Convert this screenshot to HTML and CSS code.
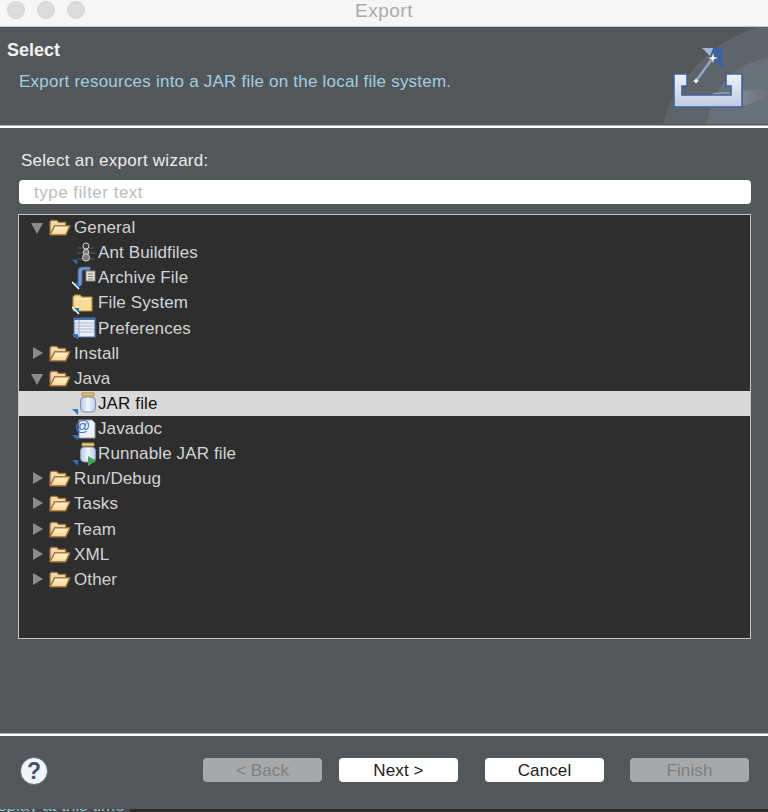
FILE: index.html
```
<!DOCTYPE html>
<html lang="en">
<head>
<meta charset="utf-8">
<title>Export</title>
<link rel="stylesheet" href="styles.css">
</head>
<body>
<svg class="defs" width="0" height="0" aria-hidden="true">
  <defs>
    <linearGradient id="fold" x1="0" y1="0" x2="0" y2="1"><stop offset="0" stop-color="#fff3cf"/><stop offset="1" stop-color="#f5d590"/></linearGradient>
    <linearGradient id="jar" x1="0" y1="0" x2="1" y2="0"><stop offset="0" stop-color="#b4c8e2"/><stop offset=".5" stop-color="#f0f4fa"/><stop offset="1" stop-color="#bccce2"/></linearGradient>
    <linearGradient id="tray" x1="0" y1="0" x2="0" y2="1"><stop offset="0" stop-color="#eef1f8"/><stop offset="1" stop-color="#bfcbe2"/></linearGradient>
    <linearGradient id="glow" x1="0" y1="0" x2="1" y2="0"><stop offset="0" stop-color="#aeb1b3" stop-opacity=".95"/><stop offset="1" stop-color="#6f767d" stop-opacity=".5"/></linearGradient>
    <symbol id="folder" viewBox="0 0 24 18">
      <path d="M2 16.500V3.500L3 1.500H9L11 3.500H18.500V7H7L2 16.500Z" fill="#efd9ac" stroke="#a5763a" stroke-width="1.300" stroke-linejoin="round"/>
      <path d="M2 16.800L7 7.200H23L18.500 16.800Z" fill="url(#fold)" stroke="#a5763a" stroke-width="1.400" stroke-linejoin="round"/>
    </symbol>
    <symbol id="corner" viewBox="0 0 8 8"><path d="M0 1H7V8Z" fill="#2f72b8"/></symbol>
  </defs>
</svg>
<div class="window">
  <header class="titlebar">
    <div class="lights"><span class="light"></span><span class="light"></span><span class="light"></span></div>
    <div class="title">Export</div>
  </header>
  <section class="banner">
    <h1 class="banner-title">Select</h1>
    <p class="banner-desc">Export resources into a JAR file on the local file system.</p>
    <svg class="banner-art" width="105" height="97" viewBox="0 0 105 97" aria-hidden="true">
      <path d="M0 97C8 60 45 15 95 0H105V97Z" fill="#5e6469"/>
      <path d="M44 97C48 65 66 38 105 31V97Z" fill="#68707a"/>
      <path d="M50 66L105 62V70L78 80H42Z" fill="url(#glow)"/>
      <path d="M11 47H24V59H19V68H68V59H63V47H79V80H11Z" fill="url(#tray)" stroke="#3f629c" stroke-width="1.600"/>
      <path d="M33 54L49 32" stroke="#8fa6cf" stroke-width="2.400"/>
      <path d="M39 21H60V43Z" fill="#3f629c"/>
      <path d="M39 21H50L47 29Z" fill="#a3b6d6"/>
      <path d="M50 26L51 30L55 31L51 32L50 36L49 32L45 31L49 30Z" fill="#fff"/>
      <path d="M33 51L34 53L36 54L34 55L33 57L32 55L30 54L32 53Z" fill="#fff"/>
    </svg>
  </section>
  <div class="divider"></div>
  <main class="body">
    <label class="field-label">Select an export wizard:</label>
    <div class="filter">type filter text</div>
    <div class="tree">
      <div class="row">
        <span class="twist open"></span>
        <svg class="folder-icon"><use href="#folder"/></svg>
        <span class="name">General</span>
      </div>
      <div class="row child">
        <svg class="leaf" viewBox="0 0 26 24"><use href="#corner" x="0" y="18" width="6" height="6"/><path d="M6 7H22M5 12H23M6 18H22" stroke="#5a5a5a" stroke-width="1"/><g fill="#7b7b7b" stroke="#cfcfcf" stroke-width="1"><circle cx="14" cy="5" r="3" fill="#3a3a3a"/><circle cx="14" cy="11" r="2.800"/><circle cx="14" cy="16.500" r="3.600"/></g></svg>
        <span class="name">Ant Buildfiles</span>
      </div>
      <div class="row child">
        <svg class="leaf" viewBox="0 0 26 24"><path d="M6 5Q6 1 10 1H18V4H11Q10 4 10 6V17Q10 20 6 21Z" fill="#7c9ace" stroke="#3f629c"/><path d="M14 5H23V15H14Z" fill="#e8e4d2" stroke="#8c8c80"/><path d="M16 8H21M16 10.500H21M16 13H21" stroke="#6d7f9c"/><use href="#corner" x="0" y="16" width="8" height="8"/><path d="M0 16L7 23" stroke="#fff" stroke-width="1.500"/></svg>
        <span class="name">Archive File</span>
      </div>
      <div class="row child">
        <svg class="leaf" viewBox="0 0 26 24"><path d="M1 19V6L3 4H8L10 6H20V20H2Z" fill="#f6dc97" stroke="#b18842" stroke-width="1.200"/><path d="M2 8H19" stroke="#fff0c4"/><use href="#corner" x="0" y="16" width="8" height="8"/><path d="M0 16L7 23" stroke="#fff" stroke-width="1.500"/></svg>
        <span class="name">File System</span>
      </div>
      <div class="row child">
        <svg class="leaf" viewBox="0 0 26 24"><path d="M2 2H23V21H2Z" fill="#e9edf6" stroke="#4a6ea6" stroke-width="1.200"/><path d="M2 3H23" stroke="#4a6ea6" stroke-width="2"/><path d="M7 4V21" stroke="#98abc9"/><path d="M3 7H22M3 10H22M3 13H22M3 16H22" stroke="#aab8cf"/><use href="#corner" x="0" y="17" width="7" height="7"/></svg>
        <span class="name">Preferences</span>
      </div>
      <div class="row">
        <span class="twist"></span>
        <svg class="folder-icon"><use href="#folder"/></svg>
        <span class="name">Install</span>
      </div>
      <div class="row">
        <span class="twist open"></span>
        <svg class="folder-icon"><use href="#folder"/></svg>
        <span class="name">Java</span>
      </div>
      <div class="row child selected">
        <svg class="leaf" viewBox="0 0 26 24"><path d="M10 2H22V5H10Z" fill="#e8cd7a" stroke="#a98a35"/><rect x="8.500" y="6" width="15" height="15" rx="4" fill="url(#jar)" stroke="#7b90b2"/><use href="#corner" x="0" y="17" width="7" height="7"/></svg>
        <span class="name">JAR file</span>
      </div>
      <div class="row child">
        <svg class="leaf" viewBox="0 0 26 24"><path d="M7 3H20L23 6V21H7Z" fill="#eff1f6" stroke="#8e9cb4"/><text class="at" x="3" y="14">@</text><use href="#corner" x="0" y="17" width="7" height="7"/></svg>
        <span class="name">Javadoc</span>
      </div>
      <div class="row child">
        <svg class="leaf" viewBox="0 0 26 24"><path d="M10 1H22V4H10Z" fill="#e8cd7a" stroke="#a98a35"/><rect x="8.500" y="5" width="15" height="15" rx="4" fill="url(#jar)" stroke="#7b90b2"/><path d="M16 14L24 19L16 24Z" fill="#3fa556"/><use href="#corner" x="0" y="17" width="7" height="7"/></svg>
        <span class="name">Runnable JAR file</span>
      </div>
      <div class="row"><span class="twist"></span><svg class="folder-icon"><use href="#folder"/></svg><span class="name">Run/Debug</span></div>
      <div class="row"><span class="twist"></span><svg class="folder-icon"><use href="#folder"/></svg><span class="name">Tasks</span></div>
      <div class="row"><span class="twist"></span><svg class="folder-icon"><use href="#folder"/></svg><span class="name">Team</span></div>
      <div class="row"><span class="twist"></span><svg class="folder-icon"><use href="#folder"/></svg><span class="name">XML</span></div>
      <div class="row"><span class="twist"></span><svg class="folder-icon"><use href="#folder"/></svg><span class="name">Other</span></div>
    </div>
  </main>
  <div class="divider"></div>
  <footer class="footer">
    <div class="help">?</div>
    <div class="actions">
      <button class="btn disabled" type="button">&lt; Back</button>
      <button class="btn next" type="button">Next &gt;</button>
      <button class="btn cancel" type="button">Cancel</button>
      <button class="btn disabled finish" type="button">Finish</button>
    </div>
  </footer>
  <div class="behind"><span class="behind-text">splay at this time</span></div>
</div>
</body>
</html>
```
FILE: styles.css
```
* { box-sizing: border-box; }
html, body { margin: 0; padding: 0; }
body { width: 768px; height: 812px; overflow: hidden; background: #53575a; font-family: "Liberation Sans", Arial, sans-serif; }
.defs { display: block; height: 0; }
.window { width: 768px; height: 812px; display: flex; flex-direction: column; overflow: hidden; }

.titlebar { height: 27px; flex: none; background: #f6f6f6; border-bottom: 1px solid #c6c6c6; display: flex; align-items: flex-start; position: relative; }
.lights { display: flex; gap: 12px; padding: 1px 0 0 7px; }
.light { width: 18px; height: 18px; border-radius: 50%; background: #dcdcdc; border: 1px solid #d4d4d4; }
.title { position: absolute; left: 0; right: 0; top: 0; text-align: center; font-size: 19px; line-height: 22px; letter-spacing: .5px; color: #aaaaaa; }

.banner { height: 98px; flex: none; position: relative; background: #53575a; padding: 13px 0 0 7px; }
.banner-title { margin: 0; font-size: 18px; line-height: 20px; font-weight: 700; color: #f2f2f2; }
.banner-desc { margin: 12px 0 0 12px; font-size: 17px; line-height: 20px; letter-spacing: .22px; color: #9fcfe4; }
.banner-art { position: absolute; right: 0; top: 0; }

.divider { height: 3px; flex: none; background: #fdfdfd; border-top: 1px solid #a9abac; }

.body { height: 605px; flex: none; padding: 23px 17px 0 18px; display: flex; flex-direction: column; }
.field-label { font-size: 17px; line-height: 20px; letter-spacing: .25px; color: #ececec; padding-left: 3px; }
.filter { margin: 9px 0 0 1px; height: 24px; background: #fff; border-radius: 4px; padding-left: 15px; font-size: 17px; line-height: 26px; letter-spacing: .5px; color: #bdbdbd; }
.tree { margin-top: 10px; height: 425px; background: #2e2e2e; border: 1px solid #c3c5c6; }

.row { height: 25.14px; display: flex; align-items: center; padding-left: 12px; font-size: 17px; letter-spacing: .12px; color: #d2d4d6; }
.row.child { padding-left: 53px; }
.row.selected { background: #d9d9d9; color: #111; }
.twist { width: 13px; height: 13px; flex: none; position: relative; }
.twist::before { content: ""; position: absolute; left: 2px; top: 0; border-style: solid; border-width: 6.500px 0 6.500px 10px; border-color: transparent transparent transparent #8b8b8b; }
.twist.open::before { left: 0; top: 2px; border-width: 11px 6.500px 0 6.500px; border-color: #8b8b8b transparent transparent transparent; }
.folder-icon { width: 23px; height: 17px; flex: none; margin-left: 4px; margin-right: 3px; }
.leaf { width: 26px; height: 24px; flex: none; }
.at { font-family: "Liberation Sans", sans-serif; font-size: 15px; font-weight: 700; font-style: italic; fill: #3f78c4; }
.name { white-space: nowrap; padding-top: 1px; }

.footer { height: 73px; flex: none; display: flex; align-items: flex-start; padding: 22px 19px 0 20px; justify-content: space-between; }
.help { width: 28px; height: 28px; margin-top: -1px; border-radius: 50%; background: #f4f5f8; border: 1px solid #5d6f8e; color: #44546f; font-size: 23px; font-weight: 700; line-height: 27px; text-align: center; }
.actions { display: flex; }
.btn { width: 119px; height: 24px; border: 0; border-radius: 4px; background: #fff; color: #1b1b1b; padding: 1px 0 0; font-family: inherit; font-size: 17px; letter-spacing: .12px; }
.next { margin-left: 17px; }
.cancel { margin-left: 27px; }
.finish { margin-left: 26px; }
.disabled { background: #a7a8a9; color: #7d7e7f; }

.behind { height: 3px; flex: none; background: linear-gradient(90deg, #454a4c 130px, #2b2b2b 130px); overflow: hidden; position: relative; }
.behind-text { position: absolute; left: -2px; top: -12px; font-size: 17px; line-height: 18px; color: #8fc4c8; }
```
